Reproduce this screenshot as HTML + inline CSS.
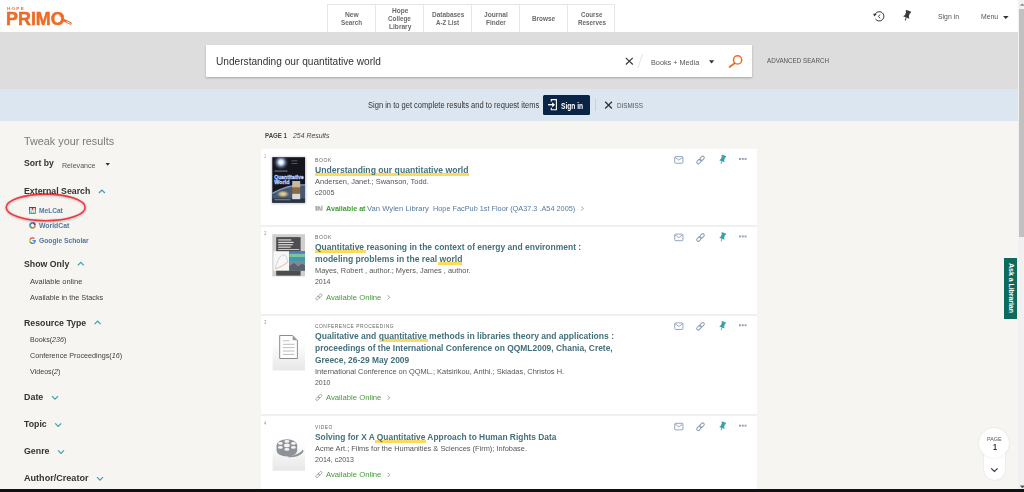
<!DOCTYPE html>
<html lang="en"><head><meta charset="utf-8"><title>Hope Primo - Understanding our quantitative world</title>
<style>
html,body{margin:0;padding:0;}
body{width:1024px;height:492px;overflow:hidden;position:relative;background:#f6f5f1;font-family:"Liberation Sans",sans-serif;}
.a{position:absolute;}
.t{position:absolute;white-space:nowrap;line-height:1;transform-origin:0 0;display:inline-block;margin:0;padding:0;text-decoration:none;}
header,form,aside,main,nav{display:block;margin:0;padding:0;}
.t i{font-style:italic;}
svg{position:absolute;overflow:visible;}
#hdr{left:0;top:0;width:1024px;height:32px;background:#fff;}
#tabs{left:327px;top:4px;width:288px;height:28px;border:1px solid #e6e6e6;border-bottom:none;box-sizing:border-box;}
.tabdiv{top:4px;width:1px;height:28px;background:#e6e6e6;}
#sband{left:0;top:32px;width:1024px;height:57px;background:#dddddd;}
#sbox{left:206px;top:45px;width:546px;height:31.5px;background:#fff;box-shadow:0 1px 2px rgba(0,0,0,.25);}
#bband{left:0;top:89px;width:1024px;height:32px;background:#dce6f0;}
#signbtn{left:543px;top:95.3px;width:47.3px;height:19.3px;background:#0a2447;border-radius:1.5px;}
.card{left:260.9px;width:496.3px;background:#fff;}
.sep{left:260.9px;width:496.3px;height:2.1px;background:#f0f0f0;}
.hl{background:#fadb5c;height:3.1px;}
#scroll{left:1017.8px;top:0;width:6.2px;height:488.5px;background:#f1f1f1;}
#thumb{left:1018.8px;top:8.8px;width:5.2px;height:228px;background:#c1c1c1;}
#bot{left:0;top:488.5px;width:1024px;height:3.5px;background:#111;}
#ask{left:1004.3px;top:257.8px;width:13px;height:60.8px;background:#0e6b5c;}
</style></head><body>
<div class="a" id="hdr"></div>
<div class="a" id="tabs"></div>
<div class="a tabdiv" style="left:375px"></div><div class="a tabdiv" style="left:423px"></div><div class="a tabdiv" style="left:471px"></div><div class="a tabdiv" style="left:519px"></div><div class="a tabdiv" style="left:567px"></div>
<div class="a" id="sband"></div>
<div class="a" id="sbox"></div>
<div class="a" id="bband"></div>
<div class="a" id="signbtn"></div>
<div class="a" style="left:594.5px;top:99px;width:1px;height:12px;background:#c9d2dc"></div>
<!-- result cards -->
<div class="a card" style="top:149.3px;height:339.5px"></div>
<div class="a sep" style="top:224.7px"></div><div class="a sep" style="top:313.6px"></div><div class="a sep" style="top:414.3px"></div>
<!-- highlights -->
<div class="a hl" style="left:315px;top:172.8px;width:153.5px"></div>
<div class="a hl" style="left:315px;top:249.9px;width:50.6px"></div>
<div class="a hl" style="left:438.3px;top:261.5px;width:24.1px"></div>
<div class="a hl" style="left:379.3px;top:338.8px;width:49.1px"></div>
<div class="a hl" style="left:374.7px;top:439.7px;width:51.1px"></div>
<!-- page bubble -->
<div class="a" style="left:983.8px;top:440px;width:21.2px;height:40px;border-radius:10.6px;background:#fff;box-shadow:0 0 2px rgba(0,0,0,.12)"></div>
<div class="a" style="left:979.4px;top:427.9px;width:30px;height:30px;border-radius:15px;background:#fff;box-shadow:0 0 2px rgba(0,0,0,.12)"></div>
<svg class="a" style="left:0;top:0" width="1024" height="492" viewBox="0 0 1024 492">
<defs>
<linearGradient id="tg" x1="0" y1="0" x2="0" y2="1"><stop offset="0" stop-color="#fff"/><stop offset=".4" stop-color="#fdfdfd"/><stop offset="1" stop-color="#e7e7e7"/></linearGradient>
<radialGradient id="star"><stop offset="0" stop-color="#fff"/><stop offset=".3" stop-color="#cfe0ff"/><stop offset="1" stop-color="#1d2a55" stop-opacity="0"/></radialGradient>
<radialGradient id="sun"><stop offset="0" stop-color="#f3e2a8"/><stop offset=".5" stop-color="#b9a777"/><stop offset="1" stop-color="#5c6d86" stop-opacity="0"/></radialGradient>
<linearGradient id="mel" x1="0" y1="0" x2="0" y2="1"><stop offset="0" stop-color="#9b2c22"/><stop offset=".38" stop-color="#9b2c22"/><stop offset=".52" stop-color="#3b8fd9"/><stop offset=".7" stop-color="#3b8fd9"/><stop offset=".9" stop-color="#4f8a2f"/><stop offset="1" stop-color="#4f8a2f"/></linearGradient>
<filter id="sh" x="-20%" y="-20%" width="140%" height="140%"><feGaussianBlur stdDeviation="0.8"/></filter>
<g id="chev-up"><path d="M0 3.4 L3 0.4 L6 3.4" fill="none" stroke="#3d9fae" stroke-width="1.2"/></g>
<g id="chev-dn"><path d="M0 0.3 L3 3.3 L6 0.3" fill="none" stroke="#3d9fae" stroke-width="1.2"/></g>
<g id="mail"><rect x="0.5" y="0.5" width="8.2" height="6.6" rx="0.8" fill="none" stroke="#8a9db5" stroke-width="0.9"/><path d="M0.8 1.2 L4.6 4.1 L8.4 1.2" fill="none" stroke="#8a9db5" stroke-width="0.9"/></g>
<g id="lnk" fill="none" stroke="#8a9db5" stroke-width="1"><rect x="-1.5" y="-4.7" width="3" height="5.2" rx="1.5" transform="rotate(45)"/><rect x="-1.5" y="-0.5" width="3" height="5.2" rx="1.5" transform="rotate(45)"/></g>
<g id="pin"><g transform="rotate(20)"><rect x="-2.7" y="-5.2" width="5.4" height="1.8" rx="0.5"/><rect x="-2" y="-3.8" width="4" height="4.6"/><path d="M-3.4 2 L-2 0 L2 0 L3.4 2 Z"/><rect x="-0.45" y="1.8" width="0.9" height="3.4"/></g></g>
<g id="dots" fill="#8c9fb6"><rect x="0" y="0" width="1.9" height="1.9"/><rect x="2.8" y="0" width="1.9" height="1.9"/><rect x="5.6" y="0" width="1.9" height="1.9"/></g>
<g id="acts"><use href="#mail" x="674.2" y="6.8"/><use href="#lnk" x="700.5" y="10.7"/><g transform="translate(722.5 10.3) scale(0.85)"><use href="#pin" fill="#3a9dab"/></g><use href="#dots" x="739" y="8.7"/></g>
<g id="olink" fill="none" stroke="#9a9a9a" stroke-width="0.8"><rect x="-1.2" y="-3.8" width="2.4" height="4.3" rx="1.2" transform="rotate(45)"/><rect x="-1.2" y="-0.5" width="2.4" height="4.3" rx="1.2" transform="rotate(45)"/></g>
<g id="rchev"><path d="M0 0 L2 2 L0 4" fill="none" stroke="#7f97b0" stroke-width="0.9"/></g>
<clipPath id="c1"><rect x="272.3" y="157.2" width="32.7" height="45.4"/></clipPath>
</defs>
<!-- logo magnifier handle -->
<g stroke="#ee6a25" fill="none"><path d="M64.2 20.4 L70.3 23.3" stroke-width="2.7" stroke-linecap="round"/><path d="M67 21.75 L70.1 23.2" stroke="#fff" stroke-width="0.9" stroke-linecap="round"/><path d="M58.8 15.6 Q61.2 15.8 61.9 18" stroke-width="0.6"/></g>
<!-- history -->
<g fill="none" stroke="#333" stroke-width="0.95"><path d="M875 14.5 A4.65 4.65 0 1 1 875.4 18.9"/><path d="M880 14.6 L878.5 16.4 L880 18.2"/></g><path d="M873.2 13.5 L876.7 14.3 L874.2 16.6 Z" fill="#333"/>
<use href="#pin" x="906.9" y="15.6" fill="#3a3a3a"/>
<path d="M1003 15.9 L1008.6 15.9 L1005.8 19.1 Z" fill="#333"/>
<!-- search box icons -->
<path d="M625.8 57.9 L632.8 64.5 M632.8 57.9 L625.8 64.5" stroke="#333" stroke-width="1.1" fill="none"/>
<path d="M642.5 54 L638 68" stroke="#dcdcdc" stroke-width="0.8"/>
<path d="M709 60.3 L714.2 60.3 L711.6 63.6 Z" fill="#333"/>
<circle cx="737.6" cy="59.9" r="4.1" fill="none" stroke="#f26a21" stroke-width="1.5"/>
<path d="M734.6 63.3 L729.6 67" stroke="#f26a21" stroke-width="1.8" stroke-linecap="round"/>
<!-- banner -->
<g fill="none" stroke="#fff" stroke-width="1.1"><path d="M551.3 101.6 L551.3 99.6 L556.4 99.6 L556.4 109.8 L551.3 109.8 L551.3 107.8"/><path d="M548 104.7 L553.6 104.7" stroke-width="1.3"/></g><path d="M552.2 102.2 L555 104.7 L552.2 107.2 Z" fill="#fff"/>
<path d="M605.2 101.7 L611.9 108.5 M611.9 101.7 L605.2 108.5" stroke="#333" stroke-width="1.25" fill="none"/>
<!-- sidebar -->
<path d="M105.5 162.9 L109.9 162.9 L107.7 165.7 Z" fill="#333"/>
<use href="#chev-up" x="98.9" y="189.6"/>
<use href="#chev-up" x="77.8" y="262"/>
<use href="#chev-up" x="94.6" y="320.8"/>
<use href="#chev-dn" x="52" y="395.9"/>
<use href="#chev-dn" x="55.2" y="423"/>
<use href="#chev-dn" x="58" y="450.1"/>
<use href="#chev-dn" x="97" y="476.9"/>
<ellipse cx="46" cy="208.1" rx="39.5" ry="13.3" fill="none" stroke="#444" stroke-opacity=".5" stroke-width="1.4" filter="url(#sh)"/>
<ellipse cx="45.7" cy="207.4" rx="39.5" ry="13.3" fill="none" stroke="#ee3840" stroke-width="1.6"/>
<rect x="29" y="207" width="6.9" height="6.8" fill="url(#mel)"/>
<text x="32.45" y="212.9" font-family="Liberation Sans, sans-serif" font-weight="700" font-size="6.6" fill="#fff" text-anchor="middle">M</text>
<!-- worldcat swirl -->
<g fill="none" stroke-width="1.7" transform="translate(32.5 225.4)"><path d="M-2.5 0.3 A2.5 2.5 0 0 1 0.2 -2.5" stroke="#3b7ec2"/><path d="M0.2 -2.5 A2.5 2.5 0 0 1 2.5 0" stroke="#7a3f98"/><path d="M2.5 0 A2.5 2.5 0 0 1 0.3 2.5" stroke="#e8842c"/><path d="M0.3 2.5 A2.5 2.5 0 0 1 -2.5 0.3" stroke="#4fa346"/></g>
<!-- google G -->
<svg x="29.1" y="237.2" width="6.9" height="6.9" viewBox="0 0 48 48"><path fill="#EA4335" d="M24 9.5c3.54 0 6.71 1.22 9.21 3.6l6.85-6.85C35.9 2.38 30.47 0 24 0 14.62 0 6.51 5.38 2.56 13.22l7.98 6.19C12.43 13.72 17.74 9.5 24 9.5z"/><path fill="#4285F4" d="M46.98 24.55c0-1.57-.15-3.09-.38-4.55H24v9.02h12.94c-.58 2.96-2.26 5.48-4.78 7.18l7.73 6c4.51-4.18 7.09-10.36 7.09-17.65z"/><path fill="#FBBC05" d="M10.53 28.59c-.48-1.45-.76-2.99-.76-4.59s.27-3.14.76-4.59l-7.98-6.19C.92 16.46 0 20.12 0 24c0 3.88.92 7.54 2.56 10.78l7.97-6.19z"/><path fill="#34A853" d="M24 48c6.48 0 11.93-2.13 15.89-5.81l-7.73-6c-2.15 1.45-4.92 2.3-8.16 2.3-6.26 0-11.57-4.22-13.47-9.91l-7.98 6.19C6.51 42.62 14.62 48 24 48z"/></svg>
<!-- result action icons -->
<use href="#acts" y="149.3"/><use href="#acts" y="226.8"/><use href="#acts" y="315.6"/><use href="#acts" y="416"/>
<!-- availability icons -->
<g fill="#9a9a9a"><rect x="315.6" y="206" width="1.3" height="4.7"/><rect x="317.4" y="206" width="1.3" height="4.7"/><rect x="319.3" y="206.6" width="1.2" height="4.1" transform="rotate(-12 319.9 208.6)"/><rect x="321.4" y="205.6" width="1.1" height="5.1"/></g>
<use href="#rchev" x="581.3" y="206.5"/>
<use href="#olink" x="318.9" y="296.9"/><use href="#rchev" x="387.7" y="295.3"/>
<use href="#olink" x="318.9" y="397.4"/><use href="#rchev" x="387.7" y="395.8"/>
<use href="#olink" x="318.9" y="474.5"/><use href="#rchev" x="387.7" y="472.9"/>
<!-- thumb 1 -->
<rect x="271.8" y="157" width="34" height="46.6" fill="#000" opacity=".25" filter="url(#sh)"/>
<rect x="272.3" y="157.2" width="32.7" height="45.4" fill="#14151d"/>
<path d="M272.3 193 Q288 184 305 184.5 L305 202.6 L272.3 202.6 Z" fill="#48586f"/>
<path d="M272.3 192.6 Q288 183.6 305 184.2 L305 185.5 Q288 185 272.3 194 Z" fill="#7f9cc4"/>
<ellipse cx="283" cy="194" rx="7" ry="4" fill="url(#sun)"/>
<rect x="272.3" y="198.4" width="32.7" height="4.2" fill="#2a3344"/>
<circle cx="281" cy="162.3" r="8" fill="url(#star)" clip-path="url(#c1)"/>
<circle cx="281" cy="162.3" r="1.3" fill="#fff"/>
<rect x="292.2" y="181" width="8" height="6.6" fill="#c9b89e"/><rect x="292.2" y="187.6" width="8" height="6.2" fill="#8c6a45"/><rect x="292.2" y="193.8" width="8" height="5.4" fill="#d9dadc"/>
<rect x="274.5" y="170.6" width="13" height="0.9" fill="#8b93a8"/><rect x="274.5" y="199.4" width="16" height="0.8" fill="#9aa3b5"/>
<rect x="291.5" y="160.5" width="6" height="0.7" fill="#6b7285"/><rect x="291.5" y="163" width="6" height="0.7" fill="#6b7285"/>
<text x="274.2" y="178.9" font-family="Liberation Sans, sans-serif" font-weight="700" font-size="5.6" fill="#7ea1ee" stroke="#c9d8ff" stroke-width="0.35" textLength="29.5" lengthAdjust="spacingAndGlyphs">Quantitative</text>
<text x="274.2" y="184.2" font-family="Liberation Sans, sans-serif" font-weight="700" font-size="5.6" fill="#7ea1ee" stroke="#c9d8ff" stroke-width="0.35" textLength="15.5" lengthAdjust="spacingAndGlyphs">World</text>
<!-- thumb 2 -->
<rect x="272.3" y="234.2" width="32.7" height="42.2" fill="#cfcfcf"/>
<rect x="276.2" y="237.1" width="24.4" height="38.5" fill="#4d4d4f"/>
<rect x="273.5" y="251.2" width="15.8" height="19.5" fill="#f7f7f7"/>
<rect x="289.3" y="251.2" width="15.7" height="9.8" fill="#3f9bb0"/><rect x="289.3" y="254" width="15.7" height="3" fill="#7cc3a0"/><rect x="289.3" y="251.2" width="15.7" height="1.8" fill="#4a7fc0"/>
<rect x="289.3" y="261" width="15.7" height="9.7" fill="#7f8a96"/><path d="M289.3 266 L294 263 L298 266.5 L302 263.5 L305 265.5 L305 270.7 L289.3 270.7 Z" fill="#59626d"/>
<g fill="#e8e8e8"><rect x="278.2" y="239.4" width="13" height="1.1"/><rect x="278.2" y="241.8" width="15.5" height="1.1"/><rect x="278.2" y="244.2" width="14.5" height="1.1"/><rect x="278.2" y="246.6" width="12.5" height="1.1"/></g><rect x="278.2" y="249" width="21" height="1" fill="#d6d257"/>
<path d="M275 268 L279 258 L283 254.5 L286 256 L288 262" fill="none" stroke="#b9b9b9" stroke-width="0.6"/><path d="M275 269 Q282 267 288 262" fill="none" stroke="#e08a6a" stroke-width="0.6"/>
<!-- thumb 3 -->
<rect x="272.6" y="328" width="32.4" height="42.5" fill="url(#tg)"/>
<path d="M279.7 335.5 L292.6 335.5 L297.4 340.3 L297.4 358.5 L279.7 358.5 Z" fill="#fff" stroke="#8c8c8c" stroke-width="1"/><path d="M292.6 335.5 L292.6 340.3 L297.4 340.3 Z" fill="#9a9a9a"/>
<g stroke="#b5b5b5" stroke-width="0.9"><path d="M282.9 340.8 H289.6 M282.9 344.3 H294.5 M282.9 347.6 H294.5 M282.9 351 H294.5 M282.9 354.4 H294.5"/></g>
<!-- thumb 4 -->
<rect x="272.6" y="428" width="32.4" height="42.7" fill="url(#tg)"/>
<g fill="#8e9197"><path d="M276.6 445.4 L276.6 450.4 A10.3 6.1 0 0 0 297.2 450.4 L297.2 445.4 Z"/><path d="M289 455.6 Q298.5 455.4 303 449.4 L303.5 451.8 Q299.5 457.6 288 457.3 Z"/><ellipse cx="286.9" cy="445.4" rx="10.3" ry="6.1"/></g>
<g fill="#f4f4f4"><ellipse cx="286.9" cy="445.4" rx="2.9" ry="1.8"/><ellipse cx="286.9" cy="441.4" rx="2.5" ry="1.4"/><ellipse cx="286.9" cy="449.4" rx="2.5" ry="1.4"/><ellipse cx="280.4" cy="443.4" rx="2.4" ry="1.4"/><ellipse cx="293.4" cy="443.4" rx="2.4" ry="1.4"/><ellipse cx="280.4" cy="447.4" rx="2.4" ry="1.4"/><ellipse cx="293.4" cy="447.4" rx="2.4" ry="1.4"/></g>
<!-- page bubble chevron -->
<path d="M991.2 468.3 L994.4 471.5 L997.6 468.3" fill="none" stroke="#333" stroke-width="1.2"/>
</svg>

<div class="a" id="ask"></div>
<span class="a" style="left:1011px;top:288.2px;width:0;height:0;"><span style="position:absolute;white-space:nowrap;transform:translate(-50%,-50%) rotate(90deg);font-size:7px;font-weight:700;color:#fff;letter-spacing:-0.05px;line-height:1">Ask a Librarian</span></span>
<header>
<a class="t" style="left:345.00px;top:12.18px;font-size:6.28px;color:#6a6a6a;font-weight:700;transform:scaleX(1.0667);">New</a>
<a class="t" style="left:341.10px;top:20.18px;font-size:6.28px;color:#6a6a6a;font-weight:700;transform:scaleX(1.0093);">Search</a>
<a class="t" style="left:391.60px;top:7.58px;font-size:6.28px;color:#6a6a6a;font-weight:700;transform:scaleX(1.0465);">Hope</a>
<a class="t" style="left:388.30px;top:16.48px;font-size:6.28px;color:#6a6a6a;font-weight:700;transform:scaleX(1.0070);">College</a>
<a class="t" style="left:388.75px;top:24.28px;font-size:6.28px;color:#6a6a6a;font-weight:700;transform:scaleX(1.0518);">Library</a>
<a class="t" style="left:431.70px;top:12.18px;font-size:6.28px;color:#6a6a6a;font-weight:700;transform:scaleX(1.0300);">Databases</a>
<a class="t" style="left:436.00px;top:20.18px;font-size:6.28px;color:#6a6a6a;font-weight:700;transform:scaleX(0.9859);">A-Z List</a>
<a class="t" style="left:484.00px;top:12.18px;font-size:6.28px;color:#6a6a6a;font-weight:700;transform:scaleX(1.0512);">Journal</a>
<a class="t" style="left:486.00px;top:20.18px;font-size:6.28px;color:#6a6a6a;font-weight:700;transform:scaleX(1.0336);">Finder</a>
<a class="t" style="left:532.00px;top:15.88px;font-size:6.28px;color:#6a6a6a;font-weight:700;transform:scaleX(1.0159);">Browse</a>
<a class="t" style="left:580.80px;top:12.18px;font-size:6.28px;color:#6a6a6a;font-weight:700;transform:scaleX(0.9910);">Course</a>
<a class="t" style="left:577.70px;top:20.18px;font-size:6.28px;color:#6a6a6a;font-weight:700;transform:scaleX(1.0081);">Reserves</a>
<span class="t" style="left:7.30px;top:7.05px;font-size:4.19px;color:#ee6a25;font-weight:700;letter-spacing:1.2px;transform:scaleX(1.0797);">HOPE</span>
<span class="t" style="left:5.90px;top:10.23px;font-size:18.16px;color:#ee6a25;font-weight:700;transform:scaleX(0.9863);-webkit-text-stroke:0.5px #ee6a25;">PRIMO</span>
<span class="t" style="left:937.75px;top:14.47px;font-size:7.12px;color:#555;font-weight:400;transform:scaleX(0.9678);">Sign in</span>
<span class="t" style="left:980.90px;top:14.47px;font-size:7.12px;color:#555;font-weight:400;transform:scaleX(0.9608);">Menu</span>
</header>
<form>
<span class="t" style="left:216.25px;top:56.14px;font-size:11.17px;color:#333;font-weight:400;transform:scaleX(0.9080);">Understanding our quantitative world</span>
<span class="t" style="left:650.75px;top:59.14px;font-size:8.10px;color:#555;font-weight:400;transform:scaleX(0.8974);">Books + Media</span>
<span class="t" style="left:767.00px;top:58.21px;font-size:6.84px;color:#555;font-weight:400;transform:scaleX(0.9145);">ADVANCED SEARCH</span>
</form>
<div role="alert">
<span class="t" style="left:367.60px;top:102.42px;font-size:8.24px;color:#333;font-weight:400;transform:scaleX(0.9150);">Sign in to get complete results and to request items</span>
<span class="t" style="left:561.00px;top:101.51px;font-size:8.38px;color:#fff;font-weight:700;transform:scaleX(0.7879);">Sign in</span>
<span class="t" style="left:617.00px;top:102.93px;font-size:6.70px;color:#555;font-weight:400;transform:scaleX(0.9455);">DISMISS</span>
</div>
<aside>
<span class="t" style="left:23.90px;top:136.46px;font-size:11.03px;color:#7a7a7a;font-weight:400;transform:scaleX(0.9810);">Tweak your results</span>
<h3 class="t" style="left:23.70px;top:159.35px;font-size:8.80px;color:#333;font-weight:700;transform:scaleX(0.9831);">Sort by</h3>
<span class="t" style="left:61.50px;top:161.53px;font-size:7.40px;color:#555;font-weight:400;transform:scaleX(0.9593);">Relevance</span>
<h3 class="t" style="left:23.70px;top:187.25px;font-size:8.80px;color:#333;font-weight:700;transform:scaleX(0.9968);">External Search</h3>
<a class="t" style="left:39.20px;top:206.89px;font-size:6.98px;color:#52779b;font-weight:700;transform:scaleX(0.9455);">MeLCat</a>
<a class="t" style="left:39.20px;top:221.79px;font-size:6.98px;color:#52779b;font-weight:700;transform:scaleX(0.9824);">WorldCat</a>
<a class="t" style="left:39.20px;top:236.99px;font-size:6.98px;color:#52779b;font-weight:700;transform:scaleX(0.9628);">Google Scholar</a>
<h3 class="t" style="left:23.70px;top:259.83px;font-size:8.94px;color:#333;font-weight:700;transform:scaleX(0.9824);">Show Only</h3>
<a class="t" style="left:29.80px;top:277.69px;font-size:6.98px;color:#3c3c3c;font-weight:400;transform:scaleX(1.0739);">Available online</a>
<a class="t" style="left:29.80px;top:293.89px;font-size:6.98px;color:#3c3c3c;font-weight:400;transform:scaleX(1.0457);">Available in the Stacks</a>
<h3 class="t" style="left:23.70px;top:318.75px;font-size:8.80px;color:#333;font-weight:700;transform:scaleX(0.9964);">Resource Type</h3>
<a class="t" style="left:29.80px;top:335.75px;font-size:7.26px;color:#3c3c3c;font-weight:400;transform:scaleX(0.9782);">Books(<i>236</i>)</a>
<a class="t" style="left:29.80px;top:352.15px;font-size:7.26px;color:#3c3c3c;font-weight:400;transform:scaleX(0.9933);">Conference Proceedings(<i>16</i>)</a>
<a class="t" style="left:29.80px;top:368.15px;font-size:7.26px;color:#3c3c3c;font-weight:400;transform:scaleX(0.9831);">Videos(<i>2</i>)</a>
<h3 class="t" style="left:23.70px;top:392.95px;font-size:8.80px;color:#333;font-weight:700;transform:scaleX(1.0116);">Date</h3>
<h3 class="t" style="left:23.70px;top:420.25px;font-size:8.80px;color:#333;font-weight:700;transform:scaleX(0.9951);">Topic</h3>
<h3 class="t" style="left:23.70px;top:447.35px;font-size:8.80px;color:#333;font-weight:700;transform:scaleX(1.0025);">Genre</h3>
<h3 class="t" style="left:23.70px;top:474.15px;font-size:8.80px;color:#333;font-weight:700;transform:scaleX(1.0310);">Author/Creator</h3>
</aside>
<main>
<span class="t" style="left:264.60px;top:132.88px;font-size:6.28px;color:#444;font-weight:700;transform:scaleX(0.9764);">PAGE 1</span>
<span class="t" style="left:292.80px;top:132.29px;font-size:6.98px;color:#444;font-weight:400;font-style:italic;transform:scaleX(0.9915);">254 Results</span>
<span class="t" style="left:264.20px;top:153.84px;font-size:5.03px;color:#999;font-weight:400;transform:scaleX(0.7508);">1</span>
<span class="t" style="left:264.00px;top:230.74px;font-size:5.03px;color:#999;font-weight:400;transform:scaleX(0.8581);">2</span>
<span class="t" style="left:264.00px;top:319.54px;font-size:5.03px;color:#999;font-weight:400;transform:scaleX(0.8581);">3</span>
<span class="t" style="left:264.00px;top:420.54px;font-size:5.03px;color:#999;font-weight:400;transform:scaleX(0.8581);">4</span>
<span class="t" style="left:315.00px;top:159.46px;font-size:4.89px;color:#666;font-weight:400;letter-spacing:0.5px;transform:scaleX(1.0439);">BOOK</span>
<span class="t" style="left:315.00px;top:236.26px;font-size:4.89px;color:#666;font-weight:400;letter-spacing:0.5px;transform:scaleX(1.0439);">BOOK</span>
<span class="t" style="left:315.30px;top:325.36px;font-size:4.89px;color:#666;font-weight:400;letter-spacing:0.5px;transform:scaleX(1.0042);">CONFERENCE PROCEEDING</span>
<span class="t" style="left:315.20px;top:426.16px;font-size:4.89px;color:#666;font-weight:400;letter-spacing:0.5px;transform:scaleX(1.0073);">VIDEO</span>
<a class="t" style="left:315.00px;top:166.02px;font-size:9.08px;color:#44707b;font-weight:700;transform:scaleX(0.9510);">Understanding our quantitative world</a>
<a class="t" style="left:315.00px;top:243.22px;font-size:9.08px;color:#44707b;font-weight:700;transform:scaleX(0.9357);">Quantitative reasoning in the context of energy and environment :</a>
<a class="t" style="left:315.00px;top:254.82px;font-size:9.08px;color:#44707b;font-weight:700;transform:scaleX(0.9456);">modeling problems in the real world</a>
<a class="t" style="left:315.00px;top:332.02px;font-size:9.08px;color:#44707b;font-weight:700;transform:scaleX(0.9423);">Qualitative and quantitative methods in libraries theory and applications :</a>
<a class="t" style="left:315.00px;top:343.92px;font-size:9.08px;color:#44707b;font-weight:700;transform:scaleX(0.9294);">proceedings of the International Conference on QQML2009, Chania, Crete,</a>
<a class="t" style="left:315.00px;top:355.72px;font-size:9.08px;color:#44707b;font-weight:700;transform:scaleX(0.9240);">Greece, 26-29 May 2009</a>
<a class="t" style="left:315.00px;top:432.92px;font-size:9.08px;color:#44707b;font-weight:700;transform:scaleX(0.9243);">Solving for X A Quantitative Approach to Human Rights Data</a>
<span class="t" style="left:315.00px;top:177.83px;font-size:7.40px;color:#555;font-weight:400;transform:scaleX(1.0120);">Andersen, Janet.; Swanson, Todd.</span>
<span class="t" style="left:315.00px;top:189.23px;font-size:7.40px;color:#555;font-weight:400;transform:scaleX(0.9682);">c2005</span>
<span class="t" style="left:315.00px;top:266.83px;font-size:7.40px;color:#555;font-weight:400;transform:scaleX(0.9988);">Mayes, Robert , author.; Myers, James , author.</span>
<span class="t" style="left:315.00px;top:278.33px;font-size:7.40px;color:#555;font-weight:400;transform:scaleX(0.9421);">2014</span>
<span class="t" style="left:315.00px;top:367.83px;font-size:7.40px;color:#555;font-weight:400;transform:scaleX(1.0073);">International Conference on QQML.; Katsirikou, Anthi.; Skiadas, Christos H.</span>
<span class="t" style="left:315.00px;top:379.03px;font-size:7.40px;color:#555;font-weight:400;transform:scaleX(0.9421);">2010</span>
<span class="t" style="left:315.00px;top:444.83px;font-size:7.40px;color:#555;font-weight:400;transform:scaleX(1.0042);">Acme Art.; Films for the Humanities &amp; Sciences (Firm); Infobase.</span>
<span class="t" style="left:315.00px;top:456.13px;font-size:7.40px;color:#555;font-weight:400;transform:scaleX(0.9585);">2014, c2013</span>
<span class="t" style="left:325.80px;top:204.53px;font-size:7.40px;color:#429c38;font-weight:700;transform:scaleX(0.9678);">Available at</span>
<a class="t" style="left:367.20px;top:204.53px;font-size:7.40px;color:#56799a;font-weight:400;transform:scaleX(1.0354);">Van Wylen Library</a>
<a class="t" style="left:432.90px;top:204.53px;font-size:7.40px;color:#56799a;font-weight:400;transform:scaleX(0.9889);">Hope FacPub 1st Floor (QA37.3 .A54 2005)</a>
<span class="t" style="left:325.80px;top:293.60px;font-size:7.68px;color:#429c38;font-weight:400;transform:scaleX(1.0016);">Available Online</span>
<span class="t" style="left:325.80px;top:394.10px;font-size:7.68px;color:#429c38;font-weight:400;transform:scaleX(1.0016);">Available Online</span>
<span class="t" style="left:325.80px;top:471.10px;font-size:7.68px;color:#429c38;font-weight:400;transform:scaleX(1.0016);">Available Online</span>
</main>
<nav>
<span class="t" style="left:987.00px;top:435.52px;font-size:6.01px;color:#555;font-weight:400;transform:scaleX(0.8932);">PAGE</span>
<span class="t" style="left:992.50px;top:443.21px;font-size:8.38px;color:#333;font-weight:700;transform:scaleX(0.8562);">1</span>
</nav>
<div class="a" id="scroll"></div>
<div class="a" id="thumb"></div>
<svg class="a" style="left:0;top:0" width="1024" height="492" viewBox="0 0 1024 492"><path d="M1019.6 5.8 L1022.3 3.4 L1025 5.8 Z" fill="#8a8a8a"/><path d="M1019.8 485.6 L1025 485.6 L1022.4 488.3 Z" fill="#555"/></svg>
<div class="a" id="bot"></div>
</body></html>
